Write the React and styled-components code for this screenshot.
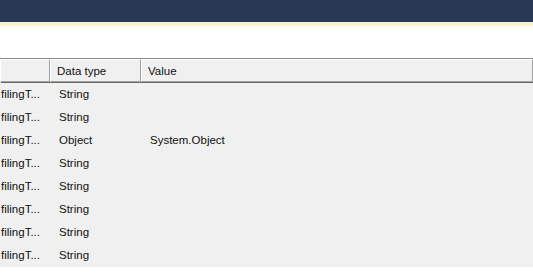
import React from 'react';
import styled, { createGlobalStyle } from 'styled-components';

const rows = [
  { name: 'filingT...', type: 'String', value: '' },
  { name: 'filingT...', type: 'String', value: '' },
  { name: 'filingT...', type: 'Object', value: 'System.Object' },
  { name: 'filingT...', type: 'String', value: '' },
  { name: 'filingT...', type: 'String', value: '' },
  { name: 'filingT...', type: 'String', value: '' },
  { name: 'filingT...', type: 'String', value: '' },
  { name: 'filingT...', type: 'String', value: '' },
];

export default function App() {
  return (
    <>
      <GlobalStyle />
      <Page>
        <TitleBar />
        <AccentStrip />
        <Toolbar />
        <Grid>
          <HeaderRow>
            <HeaderCell $width={50} />
            <HeaderCell $width={91}>Data type</HeaderCell>
            <HeaderCell $grow>Value</HeaderCell>
          </HeaderRow>
          {rows.map((r, i) => (
            <Row key={i}>
              <Cell $width={50} $pad={1}>{r.name}</Cell>
              <Cell $width={91} $pad={9}>{r.type}</Cell>
              <Cell $grow $pad={9}>{r.value}</Cell>
            </Row>
          ))}
        </Grid>
      </Page>
    </>
  );
}

const GlobalStyle = createGlobalStyle`
  html, body {
    margin: 0;
    padding: 0;
    background: #ffffff;
  }
  body {
    font-family: "Liberation Sans", Arial, sans-serif;
    font-size: 11px;
    color: #000;
  }
`;

const Page = styled.div`
  width: 533px;
  height: 280px;
  overflow: hidden;
  display: flex;
  flex-direction: column;
  background: #fff;
`;

const TitleBar = styled.div`
  height: 22px;
  background: #293955;
  flex-shrink: 0;
`;

const AccentStrip = styled.div`
  height: 4px;
  background: #fff1cc;
  flex-shrink: 0;
`;

const Toolbar = styled.div`
  height: 32px;
  background: #ffffff;
  flex-shrink: 0;
`;

const Grid = styled.div`
  display: flex;
  flex-direction: column;
  background: #f0f0f0;
  padding-bottom: 1px;
`;

const HeaderRow = styled.div`
  display: flex;
  height: 24px;
  border-top: 1px solid #8a8a8a;
  box-sizing: border-box;
`;

const HeaderCell = styled.div`
  ${p => (p.$grow ? 'flex: 1;' : `width: ${p.$width}px;`)}
  flex-shrink: 0;
  box-sizing: border-box;
  background: #f0f0f0;
  border-top: 1px solid #ffffff;
  border-left: 1px solid #ffffff;
  border-right: 1px solid #a0a0a0;
  border-bottom: 1px solid #a0a0a0;
  box-shadow: 1px 1px 0 #696969;
  padding-left: 6px;
  display: flex;
  align-items: center;
  white-space: nowrap;
  font-size: 11.5px;
  color: #111;
`;

const Row = styled.div`
  display: flex;
  height: 23px;
  align-items: center;
  padding-top: 1px;
  box-sizing: border-box;
`;

const Cell = styled.div`
  ${p => (p.$grow ? 'flex: 1;' : `width: ${p.$width}px;`)}
  flex-shrink: 0;
  box-sizing: border-box;
  padding-left: ${p => p.$pad}px;
  white-space: nowrap;
  overflow: hidden;
  font-size: 11.5px;
  color: #111;
`;
